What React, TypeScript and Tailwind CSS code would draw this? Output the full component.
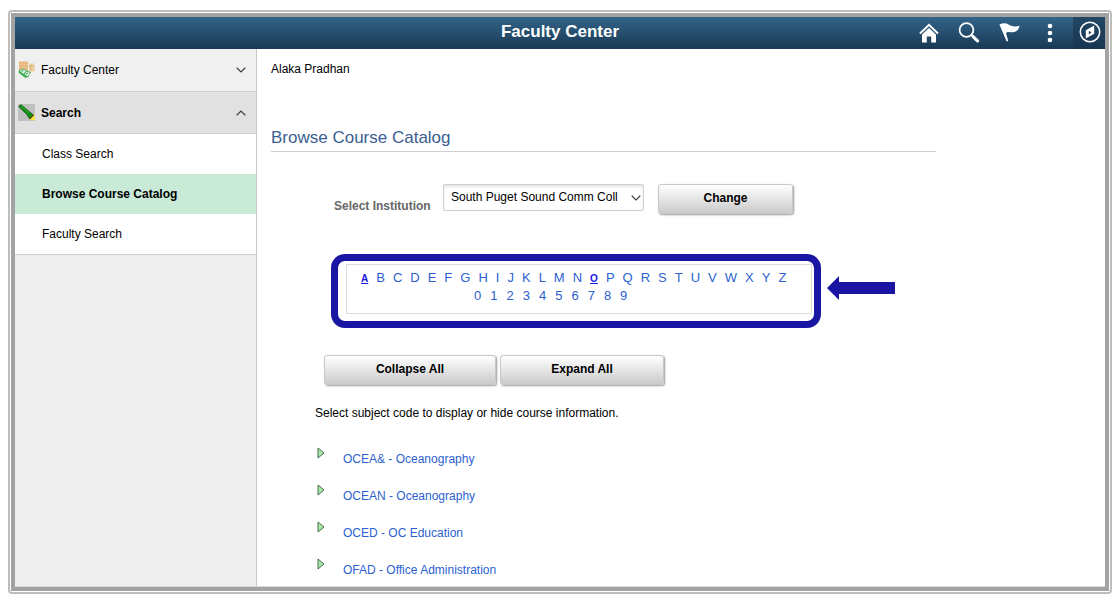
import React from "react";

const letters = "ABCDEFGHIJKLMNOPQRSTUVWXYZ".split("");
const digits = "0123456789".split("");
const subjects = [
  "OCEA& - Oceanography",
  "OCEAN - Oceanography",
  "OCED - OC Education",
  "OFAD - Office Administration",
];

const actionButton =
  "h-[30px] rounded-[3px] border border-[#c8c8c8] bg-linear-to-b from-white to-[#cbcbcb] pb-[2px] text-xs leading-4 font-bold text-black shadow-[1px_1px_2px_rgba(0,0,0,0.4)]";

function Chevron({ up = false }: { up?: boolean }) {
  return (
    <svg width="10" height="6" viewBox="0 0 10 6" fill="none" stroke="#3f3f3f" strokeWidth="1.2" aria-hidden="true">
      <path d={up ? "M0.7 5.2 5 1l4.3 4.2" : "M0.7 0.8 5 5l4.3-4.2"} />
    </svg>
  );
}

function FacultyIcon() {
  return (
    <svg width="17" height="18" viewBox="0 0 17 18" aria-hidden="true">
      <rect x="1" y="0.5" width="9" height="9" fill="#e6b67c" />
      <path d="M1 3.500h9M1 6.500h9M4 1v8M7 1v8" stroke="#f0cb98" strokeWidth="0.6" />
      <rect x="11" y="2.500" width="5.500" height="8" fill="#efd0a0" />
      <path d="M13 3v7M11 5.500h5.500" stroke="#dcb377" strokeWidth="0.8" />
      <path d="M0.7 9.800 4 7.300l9 4-3 5-3 .5-6.300-5z" fill="#3fae52" />
      <path d="m1.800 10 2.700-1.800 3.500 1.600-2.500 3zM6.500 13.300l2.300-2.900 3.200 1.500-2.300 3.300z" fill="#e6f6e8" />
      <path d="m3.500 10.500 2-1M8 13l2-1" stroke="#2f8f40" strokeWidth="1" />
    </svg>
  );
}

function FlashlightIcon() {
  return (
    <svg width="17" height="17" viewBox="0 0 17 17" aria-hidden="true">
      <rect width="17" height="17" fill="#bfbfbf" />
      <path d="m12 15 3.500-4 1.500 1v4l-4 0.500z" fill="#f6e63c" />
      <path d="M0.800 2.500 3 0.700l8 6.800 4.300 3.500-3.500 4-2.800-4.500z" fill="#128c12" stroke="#0a5a0a" strokeWidth="0.9" />
      <path d="m3 2 8 7" stroke="#31b531" strokeWidth="1" />
      <path d="m11.800 15 3.700-4" stroke="#7a4a1c" strokeWidth="1.100" />
    </svg>
  );
}

function HomeIcon() {
  return (
    <svg width="20" height="20" viewBox="0 0 20 20" fill="#fff" aria-hidden="true">
      <path d="M10 0.500 0.300 9.800l1.300 1.400L10 3.200l8.400 8 1.300-1.400z" />
      <path d="m10 4.900-7 6.600v8h4.800v-6h4.400v6H17v-8z" />
    </svg>
  );
}

function SearchIcon() {
  return (
    <svg width="22" height="21" viewBox="0 0 22 21" fill="none" stroke="#fff" aria-hidden="true">
      <circle cx="8.500" cy="8" r="6.900" strokeWidth="1.700" />
      <path d="m13.400 12.800 2 2" strokeWidth="2" />
      <path d="m15.300 14.800 4.200 4" strokeWidth="3.200" strokeLinecap="round" />
    </svg>
  );
}

function FlagIcon() {
  return (
    <svg width="21" height="19" viewBox="0 0 21 19" fill="#fff" aria-hidden="true">
      <path d="M0.400 1.500C4-0.100 7-0.100 9.500 1.500c3.500 2.200 7 2.300 11 1.200-.7 4-3 6.300-7 6.500-3 .1-4.500-1.200-6.500.8l2.200 8-1.500.6z" />
    </svg>
  );
}

function CompassIcon() {
  return (
    <svg width="22" height="22" viewBox="0 0 22 22" fill="none" aria-hidden="true">
      <circle cx="11" cy="11" r="9.700" stroke="#fff" strokeWidth="1.500" />
      <path d="m6.800 9.300 8.400-4.700v8.200l-8.400 4.700z" fill="#fff" />
      <path d="m9.800 9.800 2.700 1.600-2.700 2z" fill="#1d4160" />
    </svg>
  );
}

export default function App() {
  return (
    <div className="min-h-screen bg-white px-2 py-[10px] font-['Liberation_Sans',Arial,sans-serif] text-xs leading-4 text-black">
      <div className="rounded-[4px] border-2 border-[#bdbdbd] p-px">
        <div className="border-4 border-[#a3a3a3]">
          <header className="flex h-8 items-stretch bg-linear-to-b from-[#336489] to-[#193955] text-white">
            <div className="flex-1" />
            <h1 className="self-center pb-[3px] text-[17px] leading-5 font-bold">Faculty Center</h1>
            <div className="flex flex-1 items-stretch justify-end">
              <nav aria-label="Tools" className="flex items-center gap-[19px] pr-5 pb-px">
                <button aria-label="Home"><HomeIcon /></button>
                <button aria-label="Search"><SearchIcon /></button>
                <button aria-label="Notifications"><FlagIcon /></button>
                <button aria-label="Actions" className="pl-2">
                  <svg width="6" height="20" viewBox="0 0 6 20" fill="#fff" aria-hidden="true">
                    <circle cx="3" cy="3" r="2.300" /><circle cx="3" cy="10" r="2.300" /><circle cx="3" cy="17" r="2.300" />
                  </svg>
                </button>
              </nav>
              <button aria-label="Navigator" className="flex w-8 items-center justify-center bg-[#17334d]/60 pb-[3px] pl-[2px]"><CompassIcon /></button>
            </div>
          </header>

          <div className="flex border-b border-[#d8d8d8]">
            <aside className="w-[242px] shrink-0 border-r border-[#c9c9c9] bg-[#eeeeee]">
              <button className="flex h-[43px] w-full items-center border-b border-[#cfcfcf] bg-[#f0f0f0] pr-[10px] pl-[3px] text-left">
                <FacultyIcon />
                <span className="flex-1 pl-[6px]">Faculty Center</span>
                <Chevron />
              </button>
              <button className="flex h-[42px] w-full items-center border-b border-[#cfcfcf] bg-[#e1e1e1] pr-[10px] pl-[3px] text-left font-bold">
                <FlashlightIcon />
                <span className="flex-1 pl-[6px]">Search</span>
                <Chevron up />
              </button>
              <nav aria-label="Search pages" className="border-b border-[#cfcfcf] bg-white">
                <a href="#class" className="flex h-10 items-center pl-[27px]">Class Search</a>
                <a href="#catalog" className="flex h-10 items-center bg-[#c9ead7] pl-[27px] font-bold">Browse Course Catalog</a>
                <a href="#faculty" className="flex h-10 items-center pl-[27px]">Faculty Search</a>
              </nav>
            </aside>

            <main className="min-w-0 flex-1 pt-3 pl-[14px]">
              <p>Alaka Pradhan</p>
              <h2 className="mt-[51px] mr-[169px] border-b border-[#cfcfcf] pb-[3px] text-[17px] leading-5 text-[#3b5e92]">Browse Course Catalog</h2>

              <div className="mt-8 ml-[63px] flex items-start">
                <label htmlFor="institution" className="w-[109px] pt-[14px] font-bold text-[#666]">Select Institution</label>
                <span className="relative">
                  <select id="institution" className="h-[27px] w-[201px] appearance-none rounded-[2px] border border-[#cfcfcf] bg-white pb-px pl-[7px] text-xs shadow-[inset_0_2px_3px_rgba(0,0,0,0.1)]">
                    <option>South Puget Sound Comm Coll</option>
                  </select>
                  <span className="pointer-events-none absolute top-0 right-[3px] flex h-[27px] items-center"><Chevron /></span>
                </span>
                <button className={`${actionButton} ml-[14px] w-[135px]`}>Change</button>
              </div>

              <div className="mt-10 ml-[60px] flex items-start gap-[6px]">
                <div className="h-[74px] w-[490px] rounded-[14px] border-[7px] border-[#1a16a3] py-[3px] pr-[2px] pl-2">
                  <div className="h-[50px] border border-[#dcdcdc] pt-1 text-[13px] leading-[17px] text-[#2c5fd0]">
                    <div className="flex items-baseline gap-2 pl-[14px]">
                      {letters.map((c) => (
                        <a key={c} href={`#${c}`} className={c === "A" || c === "O" ? "text-[10px] font-bold text-[#1515e8] underline" : ""}>{c}</a>
                      ))}
                    </div>
                    <div className="flex gap-[9px] pl-[127px]">
                      {digits.map((c) => <a key={c} href={`#${c}`}>{c}</a>)}
                    </div>
                  </div>
                </div>
                <div className="pt-[22px]">
                  <svg width="68" height="24" viewBox="0 0 68 24" fill="#1a16a3" aria-hidden="true"><path d="M0 12 12 0v6h56v12H12v6z" /></svg>
                </div>
              </div>

              <div className="mt-[27px] ml-[53px] flex gap-1">
                <button className={`${actionButton} w-[172px]`}>Collapse All</button>
                <button className={`${actionButton} w-[164px]`}>Expand All</button>
              </div>
              <p className="mt-5 ml-11">Select subject code to display or hide course information.</p>

              <ul className="mt-[26px] ml-[46px]">
                {subjects.map((s) => (
                  <li key={s} className="flex h-[37px] items-start gap-[18px] last:h-7">
                    <svg width="8" height="12" viewBox="0 0 8 12" aria-hidden="true"><path d="M1 1v10l6-5z" fill="#a4eaa4" stroke="#4d6b52" /></svg>
                    <a href="#subject" className="pt-1 text-[#2c5fd0]">{s}</a>
                  </li>
                ))}
              </ul>
            </main>
          </div>
        </div>
      </div>
    </div>
  );
}
